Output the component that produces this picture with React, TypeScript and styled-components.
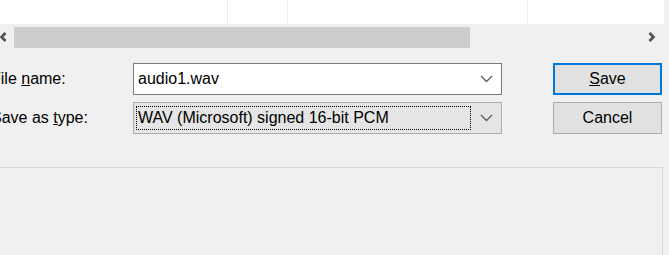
import React from "react";
import styled, { createGlobalStyle } from "styled-components";

const GlobalStyle = createGlobalStyle`
  body {
    margin: 0;
    background: #f0f0f0;
    overflow: hidden;
    font-family: "Liberation Sans", Arial, sans-serif;
    font-size: 16px;
    color: #000;
  }
`;

const Dialog = styled.div`
  width: 678px;
  height: 255px;
  margin-left: -9px;
  padding-right: 5px;
  box-sizing: border-box;
  display: flex;
  flex-direction: column;
`;

const ListView = styled.div`
  height: 24px;
  background: #fff;
  display: flex;
`;

const Column = styled.div<{ $w?: number }>`
  ${(p) => (p.$w ? `width: ${p.$w}px;` : "flex: 1;")}
  box-sizing: border-box;
  border-right: 1px solid ${(p) => (p.$w ? "#ececec" : "transparent")};
`;

const ScrollBar = styled.div`
  height: 26px;
  display: flex;
  align-items: center;
`;

const ArrowButton = styled.div<{ $w: number }>`
  width: ${(p) => p.$w}px;
  height: 100%;
  display: flex;
  align-items: center;
  justify-content: center;
`;

const Track = styled.div`
  flex: 1;
  height: 100%;
  display: flex;
  align-items: center;
`;

const Thumb = styled.div`
  width: 456px;
  height: 21px;
  background: #cdcdcd;
`;

const Form = styled.div`
  padding-top: 13px;
  display: grid;
  grid-template-columns: 142px 369px 51px 109px;
  grid-auto-rows: 32px;
  row-gap: 7px;
`;

const Label = styled.div`
  align-self: center;
  white-space: nowrap;
`;

const Combo = styled.div<{ $list?: boolean }>`
  box-sizing: border-box;
  display: flex;
  align-items: stretch;
  background: ${(p) => (p.$list ? "#e5e5e5" : "#fff")};
  border: 1px solid ${(p) => (p.$list ? "#adadad" : "#7a7a7a")};
`;

const Value = styled.div`
  flex: 1;
  display: flex;
  align-items: center;
  padding-left: 4px;
  white-space: nowrap;
`;

const FocusBox = styled.div`
  flex: 1;
  margin: 3px 0 3px 2px;
  border: 1px dotted #000;
  display: flex;
  align-items: center;
  padding-left: 1px;
  white-space: nowrap;
`;

const DropArea = styled.div`
  width: 30px;
  display: flex;
  align-items: center;
  justify-content: center;
`;

const Button = styled.div<{ $default?: boolean }>`
  grid-column: 4;
  box-sizing: border-box;
  display: flex;
  align-items: center;
  justify-content: center;
  background: #e1e1e1;
  border: ${(p) => (p.$default ? "2px solid #0078d7" : "1px solid #adadad")};
`;

const BottomPanel = styled.div`
  margin-top: 33px;
  flex: 1;
  margin-right: 1px;
  border-top: 1px solid #dadada;
  border-right: 1px solid #dadada;
`;

const Chevron = ({ dir }: { dir: "down" | "left" | "right" }) => {
  if (dir === "down") {
    return (
      <svg width="13" height="8" viewBox="0 0 13 8">
        <polyline points="1,1 6.5,6.5 12,1" fill="none" stroke="#606060" strokeWidth="1.4" />
      </svg>
    );
  }
  const pts = dir === "left" ? "6.5,1 2.5,5 6.5,9" : "1.5,1 5.5,5 1.5,9";
  return (
    <svg width="8" height="10" viewBox="0 0 8 10">
      <polyline points={pts} fill="none" stroke="#505050" strokeWidth="2.6" />
    </svg>
  );
};

export default function App() {
  return (
    <>
      <GlobalStyle />
      <Dialog>
        <ListView>
          <Column $w={237} />
          <Column $w={60} />
          <Column $w={240} />
          <Column />
        </ListView>
        <ScrollBar>
          <ArrowButton $w={23}>
            <Chevron dir="left" />
          </ArrowButton>
          <Track>
            <Thumb />
          </Track>
          <ArrowButton $w={24}>
            <Chevron dir="right" />
          </ArrowButton>
        </ScrollBar>
        <Form>
          <Label>
            File <u>n</u>ame:
          </Label>
          <Combo>
            <Value>audio1.wav</Value>
            <DropArea>
              <Chevron dir="down" />
            </DropArea>
          </Combo>
          <Button $default>
            <span>
              <u>S</u>ave
            </span>
          </Button>
          <Label>
            Save as <u>t</u>ype:
          </Label>
          <Combo $list>
            <FocusBox>WAV (Microsoft) signed 16-bit PCM</FocusBox>
            <DropArea>
              <Chevron dir="down" />
            </DropArea>
          </Combo>
          <Button>Cancel</Button>
        </Form>
        <BottomPanel />
      </Dialog>
    </>
  );
}
